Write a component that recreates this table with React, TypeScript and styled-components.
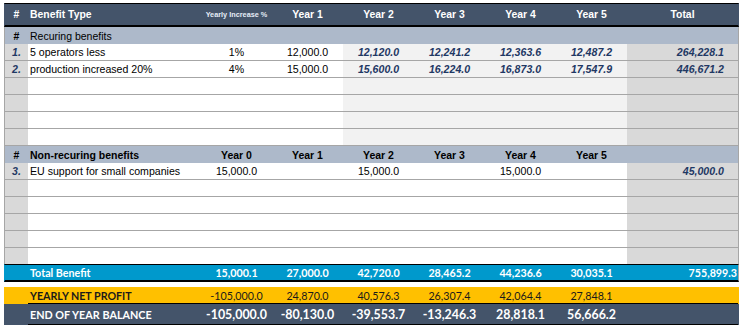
import React from "react";
import styled, { createGlobalStyle, css } from "styled-components";

const GlobalStyle = createGlobalStyle`
  html, body {
    margin: 0;
    padding: 0;
    background: #ffffff;
  }
  body {
    font-family: "Liberation Sans", Arial, sans-serif;
    color: #000;
  }
`;

const COLS = "23px 173px repeat(6, 71px) 111px";

const GRID = "#a6a6a6";
const SLATE = "#44546a";
const SECTION = "#adb9ca";
const GREY = "#d9d9d9";
const LIGHT = "#f2f2f2";
const NAVY = "#1f3864";

const Sheet = styled.div`
  width: 735px;
  margin: 3px 0 0 4px;
`;

const Row = styled.div`
  display: grid;
  grid-template-columns: ${COLS};
  box-sizing: border-box;
`;

const HeaderRow = styled(Row)`
  height: 24px;
  background: ${SLATE};
  border: 1px solid ${SLATE};
  border-top-color: #000;
  border-bottom: 2px solid #000;
  color: #fff;
  font-weight: bold;
  font-size: 10.4px;
`;

const SectionRow = styled(Row)`
  height: 17px;
  background: ${SECTION};
  border-left: 1px solid ${GRID};
  border-right: 1px solid ${GRID};
  font-size: 10.5px;
`;

const DataRow = styled(Row)<{ $last?: boolean }>`
  height: ${(p) => (p.$last ? "16px" : "17px")};
  border-left: 1px solid ${GRID};
  border-right: 1px solid ${GRID};
  border-bottom: ${(p) => (p.$last ? "none" : `1px solid ${GRID}`)};
  font-size: 10.6px;
`;

const SummaryRow = styled(Row)`
  font-family: Lato, "Liberation Sans", sans-serif;
`;

const TotalRow = styled(SummaryRow)`
  height: 18px;
  background: #0099cc;
  border-top: 1px solid #000;
  border-bottom: 2px solid #000;
  border-left: 1px solid #0099cc;
  border-right: 1px solid ${GRID};
  color: #fff;
  font-weight: bold;
  font-size: 10.7px;
  margin-bottom: 5px;
`;

const ProfitRow = styled(SummaryRow)`
  height: 17px;
  background: #ffc000;
  color: #1a1a1a;
  font-size: 10.7px;
  padding: 0 1px;
  & > *:not(:first-child) {
    border-bottom: 1px solid #000;
  }
`;

const BalanceRow = styled(SummaryRow)`
  height: 21px;
  background: ${SLATE};
  color: #fff;
  font-weight: bold;
  font-size: 12.4px;
  padding: 0 1px;
  & > *:not(:first-child) {
    border-bottom: 1px solid #000;
  }
`;

type Align = "left" | "center" | "right";

const Cell = styled.div<{ $align?: Align; $bg?: string; $calc?: boolean; $bold?: boolean; $pad?: number }>`
  display: flex;
  align-items: center;
  box-sizing: border-box;
  min-width: 0;
  white-space: nowrap;
  overflow: hidden;
  justify-content: ${(p) =>
    p.$align === "center" ? "center" : p.$align === "right" ? "flex-end" : "flex-start"};
  padding-left: ${(p) => (p.$align === "left" || !p.$align ? "2px" : "0")};
  padding-right: ${(p) => (p.$align === "right" ? `${p.$pad ?? 14}px` : "0")};
  background: ${(p) => p.$bg ?? "transparent"};
  font-weight: ${(p) => (p.$bold ? "bold" : "inherit")};
  ${(p) =>
    p.$calc &&
    css`
      font-style: italic;
      font-weight: bold;
      color: ${NAVY};
    `}
`;

const SmallHead = styled.span`
  font-size: 7.3px;
  color: #e4ecf7;
`;

const BigLabel = styled.span`
  font-size: 10.8px;
`;

type Recurring = { n: string; name: string; inc: string; y1: string; calc: string[]; total: string };

const recurring: Recurring[] = [
  {
    n: "1.",
    name: "5 operators less",
    inc: "1%",
    y1: "12,000.0",
    calc: ["12,120.0", "12,241.2", "12,363.6", "12,487.2"],
    total: "264,228.1",
  },
  {
    n: "2.",
    name: "production increased 20%",
    inc: "4%",
    y1: "15,000.0",
    calc: ["15,600.0", "16,224.0", "16,873.0", "17,547.9"],
    total: "446,671.2",
  },
];

const nonRecurring = [
  {
    n: "3.",
    name: "EU support for small companies",
    years: ["15,000.0", "", "15,000.0", "", "15,000.0", ""],
    total: "45,000.0",
  },
];

const totals = ["15,000.1", "27,000.0", "42,720.0", "28,465.2", "44,236.6", "30,035.1"];
const profit = ["-105,000.0", "24,870.0", "40,576.3", "26,307.4", "42,064.4", "27,848.1"];
const balance = ["-105,000.0", "-80,130.0", "-39,553.7", "-13,246.3", "28,818.1", "56,666.2"];

const EmptyRow: React.FC<{ shaded: boolean; last?: boolean }> = ({ shaded, last }) => (
  <DataRow $last={last}>
    <Cell $bg={GREY} />
    <Cell $bg="#fff" />
    <Cell $bg="#fff" />
    <Cell $bg="#fff" />
    {[0, 1, 2, 3].map((i) => (
      <Cell key={i} $bg={shaded ? LIGHT : "#fff"} />
    ))}
    <Cell $bg={GREY} />
  </DataRow>
);

export default function App() {
  return (
    <>
      <GlobalStyle />
      <Sheet>
        <HeaderRow>
          <Cell $align="center">#</Cell>
          <Cell>Benefit Type</Cell>
          <Cell $align="center">
            <SmallHead>Yearly Increase %</SmallHead>
          </Cell>
          {["Year 1", "Year 2", "Year 3", "Year 4", "Year 5", "Total"].map((h) => (
            <Cell key={h} $align="center">
              {h}
            </Cell>
          ))}
        </HeaderRow>

        <SectionRow>
          <Cell $align="center" $bold>
            #
          </Cell>
          <Cell>Recuring benefits</Cell>
        </SectionRow>

        {recurring.map((r) => (
          <DataRow key={r.n}>
            <Cell $align="center" $bg={GREY} $calc>
              {r.n}
            </Cell>
            <Cell $bg="#fff">{r.name}</Cell>
            <Cell $align="center" $bg="#fff">
              {r.inc}
            </Cell>
            <Cell $align="center" $bg="#fff">
              {r.y1}
            </Cell>
            {r.calc.map((v, i) => (
              <Cell key={i} $align="center" $bg={LIGHT} $calc>
                {v}
              </Cell>
            ))}
            <Cell $align="right" $bg={GREY} $calc>
              {r.total}
            </Cell>
          </DataRow>
        ))}
        {[0, 1, 2, 3].map((i) => (
          <EmptyRow key={i} shaded />
        ))}

        <SectionRow>
          <Cell $align="center" $bold>
            #
          </Cell>
          <Cell $bold>Non-recuring benefits</Cell>
          {["Year 0", "Year 1", "Year 2", "Year 3", "Year 4", "Year 5"].map((h) => (
            <Cell key={h} $align="center" $bold>
              {h}
            </Cell>
          ))}
          <Cell />
        </SectionRow>

        {nonRecurring.map((r) => (
          <DataRow key={r.n}>
            <Cell $align="center" $bg={GREY} $calc>
              {r.n}
            </Cell>
            <Cell $bg="#fff">{r.name}</Cell>
            {r.years.map((v, i) => (
              <Cell key={i} $align="center" $bg="#fff">
                {v}
              </Cell>
            ))}
            <Cell $align="right" $bg={GREY} $calc>
              {r.total}
            </Cell>
          </DataRow>
        ))}
        {[0, 1, 2, 3, 4].map((i) => (
          <EmptyRow key={i} shaded={false} last={i === 4} />
        ))}

        <TotalRow>
          <Cell />
          <Cell>Total Benefit</Cell>
          {totals.map((v, i) => (
            <Cell key={i} $align="center">
              {v}
            </Cell>
          ))}
          <Cell $align="right" $pad={1}>
            755,899.3
          </Cell>
        </TotalRow>

        <ProfitRow>
          <Cell />
          <Cell $bold>YEARLY NET PROFIT</Cell>
          {profit.map((v, i) => (
            <Cell key={i} $align="center">
              {v}
            </Cell>
          ))}
          <Cell />
        </ProfitRow>

        <BalanceRow>
          <Cell />
          <Cell>
            <BigLabel>END OF YEAR BALANCE</BigLabel>
          </Cell>
          {balance.map((v, i) => (
            <Cell key={i} $align="center">
              {v}
            </Cell>
          ))}
          <Cell />
        </BalanceRow>
      </Sheet>
    </>
  );
}
